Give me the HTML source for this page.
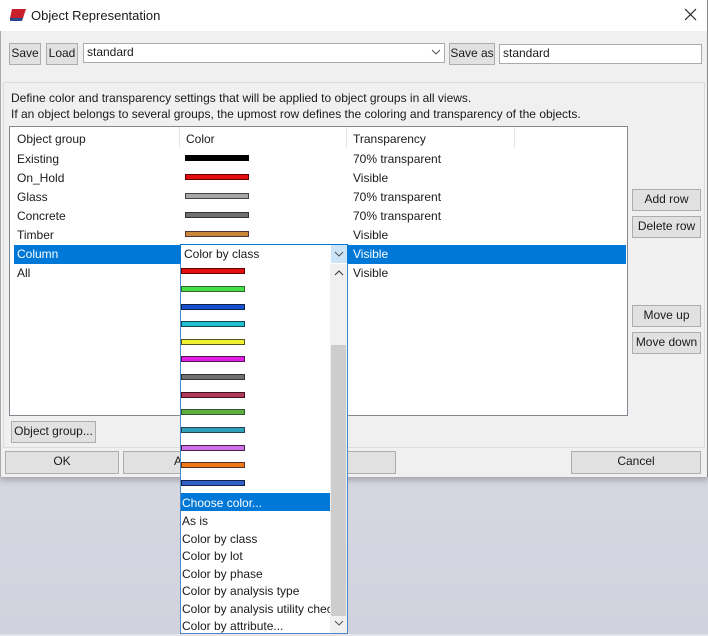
<!DOCTYPE html>
<html><head><meta charset="utf-8"><style>
*{box-sizing:border-box;margin:0;padding:0}
body{width:708px;height:634px;overflow:hidden;position:relative;font-family:"Liberation Sans",sans-serif;font-size:12px;color:#1a1a1a;background:linear-gradient(#e4e4ec,#d2d2de)}
.a{position:absolute}
.btn{position:absolute;background:#e1e1e1;border:1px solid #adadad;text-align:center;line-height:19px;white-space:nowrap}
.inp{position:absolute;background:#fff;border:1px solid #7a7a7a;padding-left:3px;line-height:17px}
.ln{position:absolute;height:6px;border:1px solid #333}
.row{position:absolute;left:17px;}
</style></head><body>
<div class="a" style="left:0;top:0;width:708px;height:477px;background:#f0f0f0;border-right:1px solid #888;border-left:1px solid #aaa;box-shadow:0 3px 6px rgba(0,0,0,.25)"></div>
<div class="a" style="left:0;top:0;width:707px;height:31px;background:#fff"></div>
<svg class="a" style="left:9px;top:8px" width="18" height="14"><path d="M3 1 L17 1 L14 10 L1 10 Z" fill="#c8202a"/><path d="M1 10 L14 10 L13 13 L1 13Z" fill="#2b4a8a"/></svg>
<div class="a" style="left:31px;top:8px;font-size:13px">Object Representation</div>
<svg class="a" style="left:684px;top:8px" width="13" height="13"><path d="M1 1L12 12M12 1L1 12" stroke="#222" stroke-width="1.2"/></svg>
<div class="btn" style="left:9px;top:43px;width:32px;height:22px">Save</div>
<div class="btn" style="left:46px;top:43px;width:32px;height:22px">Load</div>
<div class="inp" style="left:83px;top:43px;width:362px;height:20px;border-color:#aaa">standard</div>
<svg class="a" style="left:431px;top:49px" width="10" height="6"><path d="M1 1L5 5L9 1" stroke="#555" fill="none"/></svg>
<div class="btn" style="left:449px;top:43px;width:46px;height:22px">Save as</div>
<div class="inp" style="left:499px;top:44px;width:203px;height:20px;border-color:#aaa">standard</div>
<div class="a" style="left:3px;top:82px;width:702px;height:366px;border:1px solid #dcdcdc"></div>
<div class="a" style="left:11px;top:90px;line-height:16px">Define color and transparency settings that will be applied to object groups in all views.<br>If an object belongs to several groups, the upmost row defines the coloring and transparency of the objects.</div>
<div class="a" style="left:9px;top:126px;width:619px;height:290px;background:#fff;border:1px solid #828790"></div>
<div class="a" style="left:179px;top:127px;width:1px;height:21px;background:#e5e5e5"></div>
<div class="a" style="left:346px;top:127px;width:1px;height:21px;background:#e5e5e5"></div>
<div class="a" style="left:514px;top:127px;width:1px;height:21px;background:#e5e5e5"></div>
<div class="row" style="top:132px">Object group</div>
<div class="a" style="left:186px;top:132px">Color</div>
<div class="a" style="left:353px;top:132px">Transparency</div>
<div class="a" style="left:14px;top:245px;width:612px;height:19px;background:#0078d7"></div>
<div class="row" style="top:152px">Existing</div><div class="ln" style="left:185px;top:155px;width:64px;background:#000;border-color:#000"></div><div class="a" style="left:353px;top:152px">70% transparent</div>
<div class="row" style="top:171px">On_Hold</div><div class="ln" style="left:185px;top:174px;width:64px;background:#e01010;border-color:#600"></div><div class="a" style="left:353px;top:171px">Visible</div>
<div class="row" style="top:190px">Glass</div><div class="ln" style="left:185px;top:193px;width:64px;background:#a8a8a8;border-color:#444"></div><div class="a" style="left:353px;top:190px">70% transparent</div>
<div class="row" style="top:209px">Concrete</div><div class="ln" style="left:185px;top:212px;width:64px;background:#707070;border-color:#333"></div><div class="a" style="left:353px;top:209px">70% transparent</div>
<div class="row" style="top:228px">Timber</div><div class="ln" style="left:185px;top:231px;width:64px;background:#c88a3a;border-color:#533"></div><div class="a" style="left:353px;top:228px">Visible</div>
<div class="row" style="top:247px;color:#fff">Column</div><div class="a" style="left:353px;top:247px;color:#fff">Visible</div>
<div class="row" style="top:266px">All</div><div class="a" style="left:353px;top:266px">Visible</div>
<div class="btn" style="left:632px;top:189px;width:69px;height:22px">Add row</div>
<div class="btn" style="left:632px;top:216px;width:69px;height:22px">Delete row</div>
<div class="btn" style="left:632px;top:305px;width:69px;height:22px">Move up</div>
<div class="btn" style="left:632px;top:332px;width:69px;height:22px">Move down</div>
<div class="btn" style="left:11px;top:421px;width:85px;height:22px">Object group...</div>
<div class="btn" style="left:5px;top:451px;width:114px;height:23px">OK</div>
<div class="btn" style="left:123px;top:451px;width:114px;height:23px;text-align:left;padding-left:50px">A</div>
<div class="btn" style="left:290px;top:451px;width:106px;height:23px"></div>
<div class="btn" style="left:571px;top:451px;width:130px;height:23px">Cancel</div>
<!-- dropdown -->
<div class="a" style="left:180px;top:244px;width:168px;height:20px;background:#fff;border:1px solid #0078d7"></div>
<div class="a" style="left:184px;top:247px">Color by class</div>
<div class="a" style="left:331px;top:245px;width:16px;height:18px;background:#cce4f7"></div>
<svg class="a" style="left:334px;top:251px" width="10" height="6"><path d="M1 1L5 5L9 1" stroke="#555" fill="none"/></svg>
<div class="a" style="left:180px;top:263px;width:168px;height:371px;background:#fff;border:1px solid #4a8ac8;border-top:none"></div>
<div class="a" style="left:330px;top:264px;width:17px;height:369px;background:#f0f0f0"></div>
<div class="a" style="left:331px;top:345px;width:15px;height:271px;background:#cdcdcd"></div>
<svg class="a" style="left:334px;top:270px" width="10" height="6"><path d="M1 5L5 1L9 5" stroke="#333" fill="none"/></svg>
<svg class="a" style="left:334px;top:620px" width="10" height="6"><path d="M1 1L5 5L9 1" stroke="#555" fill="none"/></svg>
<div class="ln" style="left:181px;top:268px;width:64px;background:#e01010;border-color:#600"></div>
<div class="ln" style="left:181px;top:286px;width:64px;background:#44dd44;border-color:#363"></div>
<div class="ln" style="left:181px;top:304px;width:64px;background:#1550d0;border-color:#124"></div>
<div class="ln" style="left:181px;top:321px;width:64px;background:#20c0d0;border-color:#145"></div>
<div class="ln" style="left:181px;top:339px;width:64px;background:#f0f030;border-color:#552"></div>
<div class="ln" style="left:181px;top:356px;width:64px;background:#e020e0;border-color:#515"></div>
<div class="ln" style="left:181px;top:374px;width:64px;background:#707070;border-color:#333"></div>
<div class="ln" style="left:181px;top:392px;width:64px;background:#b03a5a;border-color:#412"></div>
<div class="ln" style="left:181px;top:409px;width:64px;background:#60b040;border-color:#353"></div>
<div class="ln" style="left:181px;top:427px;width:64px;background:#30a0b8;border-color:#245"></div>
<div class="ln" style="left:181px;top:445px;width:64px;background:#d070e8;border-color:#424"></div>
<div class="ln" style="left:181px;top:462px;width:64px;background:#f07818;border-color:#532"></div>
<div class="ln" style="left:181px;top:480px;width:64px;background:#3060c8;border-color:#124"></div>
<div class="a" style="left:181px;top:493px;width:149px;height:18px;background:#0078d7"></div>
<div class="a" style="left:182px;top:496px;color:#fff;line-height:14px">Choose color...</div>
<div class="a" style="left:182px;top:513px;line-height:17.5px;white-space:nowrap;width:148px;overflow:hidden">As is<br>Color by class<br>Color by lot<br>Color by phase<br>Color by analysis type<br>Color by analysis utility check<br>Color by attribute...</div>
</body></html>
